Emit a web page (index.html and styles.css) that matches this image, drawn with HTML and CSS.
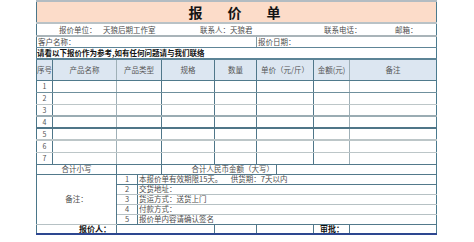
FILE: index.html
```html
<!DOCTYPE html>
<html lang="zh-CN">
<head>
<meta charset="utf-8">
<title>报价单</title>
<link rel="stylesheet" href="styles.css">
</head>
<body>
<div class="sheet">
<table class="quote">
  <colgroup>
    <col class="w16"><col class="w64"><col class="w21"><col class="w24"><col class="w53">
    <col class="w42"><col class="w20"><col class="w37"><col class="w36"><col class="w87">
  </colgroup>
  <tr class="r-title">
    <td colspan="10" class="title"><div class="title-text"><span>报</span><span>价</span><span>单</span></div></td>
  </tr>
  <tr class="r-info">
    <td colspan="10">
      <div class="info">
        <span class="i1">报价单位：</span>
        <span class="i2">天狼后期工作室</span>
        <span class="i3">联系人：天狼君</span>
        <span class="i4">联系电话：</span>
        <span class="i5">邮箱：</span>
      </div>
    </td>
  </tr>
  <tr class="r-client">
    <td colspan="6" class="left">客户名称：</td>
    <td colspan="4" class="left bl">报价日期：</td>
  </tr>
  <tr class="r-notice">
    <td colspan="10" class="notice">请看以下报价作为参考,如有任何问题请与我们联络</td>
  </tr>
  <tr class="r-head">
    <td class="vr">序号</td>
    <td class="vr-l">产品名称</td>
    <td colspan="2" class="vr">产品类型</td>
    <td class="vr">规格</td>
    <td class="vr">数量</td>
    <td colspan="2" class="vr">单价（元/斤）</td>
    <td class="vr-l">金额(元)</td>
    <td>备注</td>
  </tr>
  <tr class="r-data h1"><td class="vr">1</td><td class="vr-l"></td><td colspan="2" class="vr"></td><td class="vr"></td><td class="vr"></td><td colspan="2" class="vr"></td><td class="vr-l"></td><td></td></tr>
  <tr class="r-data h2"><td class="vr">2</td><td class="vr-l"></td><td colspan="2" class="vr"></td><td class="vr"></td><td class="vr"></td><td colspan="2" class="vr"></td><td class="vr-l"></td><td></td></tr>
  <tr class="r-data h3"><td class="vr">3</td><td class="vr-l"></td><td colspan="2" class="vr"></td><td class="vr"></td><td class="vr"></td><td colspan="2" class="vr"></td><td class="vr-l"></td><td></td></tr>
  <tr class="r-data h4"><td class="vr">4</td><td class="vr-l"></td><td colspan="2" class="vr"></td><td class="vr"></td><td class="vr"></td><td colspan="2" class="vr"></td><td class="vr-l"></td><td></td></tr>
  <tr class="r-data h5"><td class="vr">5</td><td class="vr-l"></td><td colspan="2" class="vr"></td><td class="vr"></td><td class="vr"></td><td colspan="2" class="vr"></td><td class="vr-l"></td><td></td></tr>
  <tr class="r-data h6"><td class="vr">6</td><td class="vr-l"></td><td colspan="2" class="vr"></td><td class="vr"></td><td class="vr"></td><td colspan="2" class="vr"></td><td class="vr-l"></td><td></td></tr>
  <tr class="r-data h7"><td class="vr">7</td><td class="vr-l"></td><td colspan="2" class="vr"></td><td class="vr"></td><td class="vr"></td><td colspan="2" class="vr"></td><td class="vr-l"></td><td></td></tr>
  <tr class="r-sum">
    <td colspan="2" class="vr">合计小写</td>
    <td colspan="2" class="vr"></td>
    <td colspan="3" class="vr sum-big">合计人民币金额（大写）</td>
    <td colspan="3"></td>
  </tr>
  <tr class="r-note n1">
    <td colspan="2" rowspan="5" class="vr remark">备注：</td>
    <td class="vr num">1</td>
    <td colspan="7" class="left">本报价单有效期限15天。&nbsp;&nbsp;&nbsp;&nbsp;&nbsp;供货期：7天以内</td>
  </tr>
  <tr class="r-note n2"><td class="vr num">2</td><td colspan="7" class="left">交货地址：</td></tr>
  <tr class="r-note n3"><td class="vr num">3</td><td colspan="7" class="left">货运方式：送货上门</td></tr>
  <tr class="r-note n4"><td class="vr num">4</td><td colspan="7" class="left">付款方式：</td></tr>
  <tr class="r-note n5"><td class="vr num">5</td><td colspan="7" class="left">报价单内容请确认签名</td></tr>
  <tr class="r-sign">
    <td colspan="2" class="vr sign">报价人：</td>
    <td colspan="3" class="vr"></td>
    <td class="vr"></td>
    <td colspan="2" class="vr"></td>
    <td class="vr sign">审批：</td>
    <td></td>
  </tr>
</table>
</div>
</body>
</html>
```

FILE: styles.css
```css
html, body {
  margin: 0;
  padding: 0;
  background: #ffffff;
}

.sheet {
  padding: 0 0 0 36px;
}

.quote {
  border-collapse: collapse;
  table-layout: fixed;
  width: 401px;
  font-family: "Noto Sans CJK SC", "Liberation Sans", sans-serif;
  font-size: 7.5px;
  color: #4c4c4c;
  border-top: 2px solid #b3bcc2;
  border-left: 1px solid #4a7689;
  border-right: 1px solid #4a7a8e;
  border-bottom: 2px solid #2d4790;
}

.w16 { width: 16px; }
.w64 { width: 64px; }
.w21 { width: 21px; }
.w24 { width: 24px; }
.w53 { width: 53px; }
.w42 { width: 42px; }
.w20 { width: 20px; }
.w37 { width: 37px; }
.w36 { width: 36px; }
.w87 { width: 87px; }

.quote td {
  padding: 0;
  line-height: 8px;
  white-space: nowrap;
  overflow: hidden;
  text-align: center;
  vertical-align: middle;
}

.quote td.left {
  text-align: left;
  padding-left: 1px;
}

.vr { border-right: 1px solid #50778a; }
.vr-l { border-right: 1px solid #9fb0b7; }
.bl { border-left: 1px solid #7d98a4; }

/* title */
.r-title { height: 22px; }
.title {
  background: #fcdcc9;
  border-bottom: 2px solid #b9c2c6;
}
.title-text {
  display: flex;
  justify-content: center;
  gap: 25px;
  padding-right: 4px;
  font-size: 14px;
  line-height: 16px;
  font-weight: 700;
  color: #141414;
}

/* info row */
.r-info { height: 13px; }
.r-info td { border-bottom: 2px solid #a9b4b9; }
.info {
  display: flex;
  padding-left: 22px;
  text-align: left;
}
.i1 { width: 44px; }
.i2 { width: 97px; }
.i3 { width: 124px; }
.i4 { width: 71px; }
.i5 { flex: 1; }

.r-client { height: 11px; }
.r-client td { border-bottom: 1px solid #5e8597; }

.r-notice { height: 12px; }
.notice {
  text-align: left !important;
  font-weight: 700;
  color: #111111;
  border-bottom: 2px solid #5c8496;
}

/* header */
.r-head { height: 21px; }
.r-head td {
  background: #dce6f1;
  color: #555555;
  border-bottom: 1px solid #4f7a8c;
}

/* data rows */
.r-data { height: 12px; }
.r-data td:first-child { color: #555555; font-size: 7px; }
.h1 td { border-bottom: 1px solid #6f909d; }
.h2 td { border-bottom: 1px solid #bcc6c8; }
.h3 td { border-bottom: 2px solid #9aacb3; }
.h4 td { border-bottom: 2px solid #4f7688; }
.h5 td { border-bottom: 2px solid #bcc6c8; }
.h6 td { border-bottom: 1px solid #bcc6c8; }
.h7 td { border-bottom: 1px solid #52798b; }

/* sum row */
.r-sum { height: 10px; }
.r-sum td { border-bottom: 1px solid #52798b; }
.sum-big { text-align: right !important; padding-right: 2px !important; }

/* notes */
.r-note { height: 10px; }
.r-note td { border-bottom: 1px solid #52798b; }
.n2 td, .n3 td, .n4 td { border-bottom-color: #b6c1c4; }
.remark { border-bottom: 1px solid #b6c1c4 !important; }
.num { color: #555555; }

/* signature */
.r-sign { height: 10px; }
.sign {
  font-weight: 700;
  color: #111111;
  font-size: 8px;
  text-align: right !important;
  padding-right: 5px !important;
}
```
